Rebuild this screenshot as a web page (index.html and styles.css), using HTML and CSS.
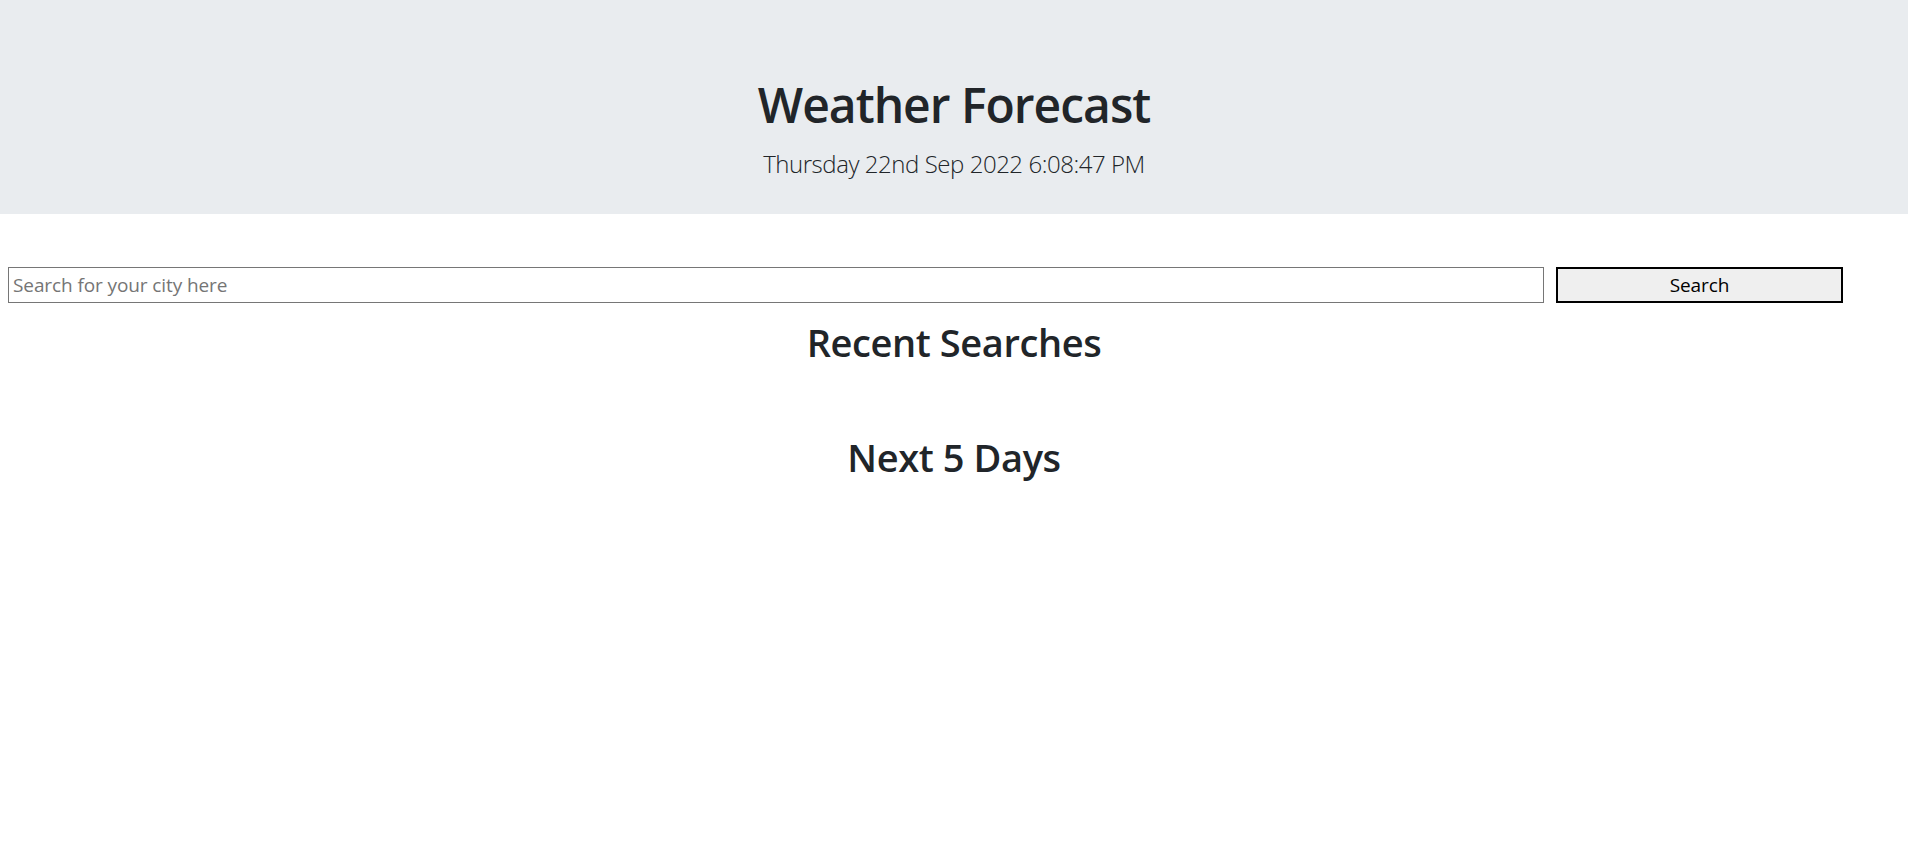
FILE: index.html
```html
<!DOCTYPE html>
<html lang="en">
<head>
<meta charset="utf-8">
<title>Weather Forecast</title>
<link rel="stylesheet" href="styles.css">
</head>
<body>
<header class="jumbotron">
  <h1 class="title">Weather Forecast</h1>
  <p class="lead">Thursday 22nd Sep 2022 6:08:47 PM</p>
</header>
<main class="content">
  <form class="search-form">
    <input class="search-input" type="text" placeholder="Search for your city here">
    <button class="search-btn" type="button">Search</button>
  </form>
  <h2 class="section-title">Recent Searches</h2>
  <div class="recent-list"></div>
  <h2 class="section-title next">Next 5 Days</h2>
  <div class="forecast"></div>
</main>
</body>
</html>
```
FILE: styles.css
```css
* { box-sizing: border-box; }
html, body {
  margin: 0;
  padding: 0;
  background: #ffffff;
}
body {
  font-family: "Open Sans", "Noto Sans", sans-serif;
  color: #212529;
}
.jumbotron {
  background: #e9ecef;
  height: 214px;
  padding-top: 75px;
  text-align: center;
}
.title {
  margin: 0 0 10px;
  font-size: 48px;
  line-height: 60px;
  font-weight: 600;
  letter-spacing: -1px;
}
.lead {
  margin: 0;
  font-size: 24px;
  line-height: 37px;
  font-weight: 300;
  letter-spacing: -0.45px;
}
.content {
  padding-top: 53px;
}
.search-form {
  display: flex;
  align-items: stretch;
  gap: 12px;
  margin: 0 0 0 8px;
  height: 36px;
}
.search-input {
  width: 1536px;
  height: 36px;
  border: 1px solid #767676;
  border-radius: 0;
  padding: 0 4px;
  font-family: inherit;
  font-size: 19px;
  letter-spacing: -0.1px;
  color: #212529;
  outline: none;
}
.search-input::placeholder {
  color: #757575;
}
.search-btn {
  width: 287px;
  height: 36px;
  border: 2px solid #000;
  border-radius: 0;
  background: #efefef;
  font-family: inherit;
  font-size: 19px;
  letter-spacing: -0.1px;
  color: #000;
  padding: 0;
}
.section-title {
  margin: 15px 0 0;
  font-size: 38px;
  line-height: 48px;
  font-weight: 600;
  letter-spacing: -0.4px;
  text-align: center;
}
.recent-list {
  height: 67px;
}
.section-title.next {
  margin-top: 0;
}
```
